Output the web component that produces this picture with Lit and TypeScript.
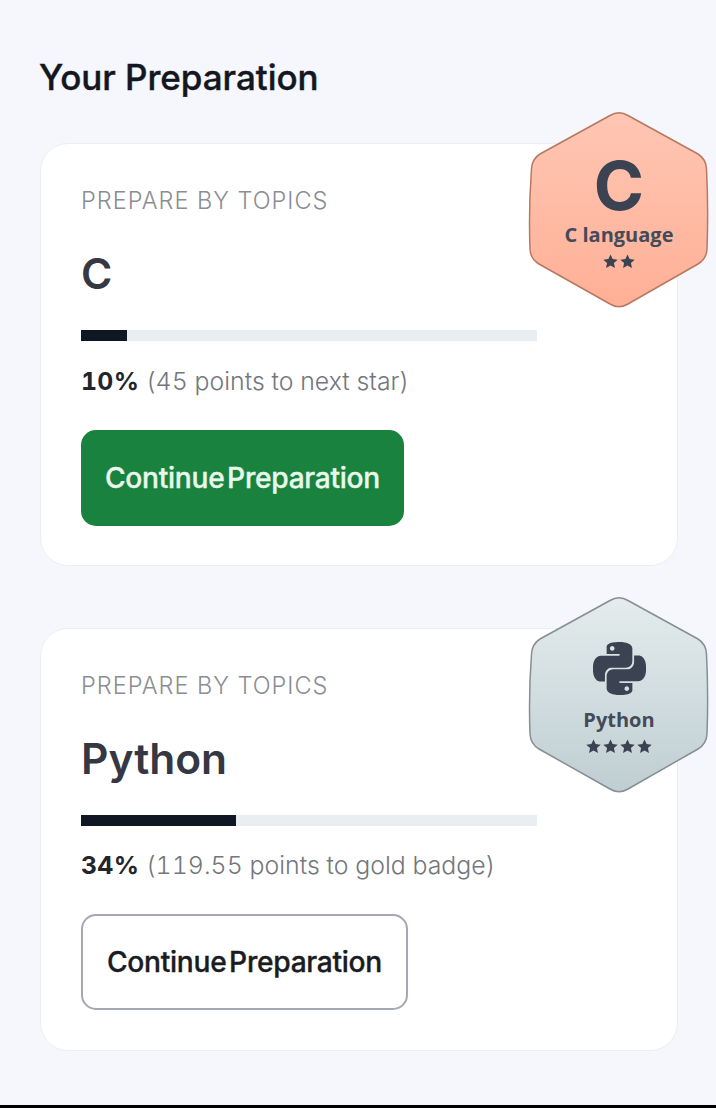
import { LitElement, html, css, svg } from "lit";
import { customElement } from "lit/decorators.js";

const PY = "M14.25.18l.9.2.73.26.59.3.45.32.34.34.25.34.16.33.1.3.04.26.02.2-.01.13V8.5l-.05.63-.13.55-.21.46-.26.38-.3.31-.33.25-.35.19-.35.14-.33.1-.3.07-.26.04-.21.02H8.77l-.69.05-.59.14-.5.22-.41.27-.33.32-.27.35-.2.36-.15.37-.1.35-.07.32-.04.27-.02.21v3.06H3.17l-.21-.03-.28-.07-.32-.12-.35-.18-.36-.26-.36-.36-.35-.46-.32-.59-.28-.73-.21-.88-.14-1.05-.05-1.23.06-1.22.16-1.04.24-.87.32-.71.36-.57.4-.44.42-.33.42-.24.4-.16.36-.1.32-.05.24-.01h.16l.06.01h8.16v-.83H6.18l-.01-2.75-.02-.37.05-.34.11-.31.17-.28.25-.26.31-.23.38-.2.44-.18.51-.15.58-.12.64-.1.71-.06.77-.04.84-.02 1.27.05zm-6.3 1.98l-.23.33-.08.41.08.41.23.34.33.22.41.09.41-.09.33-.22.23-.34.08-.41-.08-.41-.23-.33-.33-.22-.41-.09-.41.09zm13.09 3.95l.28.06.32.12.35.18.36.27.36.35.35.47.32.59.28.73.21.88.14 1.04.05 1.23-.06 1.23-.16 1.04-.24.86-.32.71-.36.57-.4.45-.42.33-.42.24-.4.16-.36.09-.32.05-.24.02-.16-.01h-8.22v.82h5.84l.01 2.76.02.36-.05.34-.11.31-.17.29-.25.25-.31.24-.38.2-.44.17-.51.15-.58.13-.64.09-.71.07-.77.04-.84.01-1.27-.04-1.07-.14-.9-.2-.73-.25-.59-.3-.45-.33-.34-.34-.25-.34-.16-.33-.1-.3-.04-.25-.02-.2.01-.13v-5.34l.05-.64.13-.54.21-.46.26-.38.3-.32.33-.24.35-.2.35-.14.33-.1.3-.06.26-.04.21-.02.13-.01h5.84l.69-.05.59-.14.5-.21.41-.28.33-.32.27-.35.2-.36.15-.36.1-.35.07-.32.04-.28.02-.21V6.07h2.09l.14.01zm-6.47 14.25l-.23.33-.08.41.08.41.23.33.33.23.41.08.41-.08.33-.23.23-.33.08-.41-.08-.41-.23-.33-.33-.23-.41-.08-.41.08z";
const HEX = "M80 4.500 Q89 -1 98 4.500 L168 43 Q176 48 176.500 58 Q178.500 98 177 138 Q176.500 148 168 153 L98 193 Q89 198.500 80 193 L9 153 Q0.500 148 0 138 Q-1.500 98 1.500 58 Q2 48 10 43 Z";
const STAR = "M12 2l3 6.600 7.200.8-5.400 4.800 1.500 7.100L12 17.700l-6.300 3.600 1.500-7.100L1.800 9.400l7.200-.8z";

interface Topic {
  name: string; pct: number; rest: string; solid: boolean;
  from: string; to: string; edge: string; stars: number; badge: string; gid: string; nudge: string;
}
const topics: Topic[] = [
  { name: "C", pct: 10, rest: "(45 points to next star)", solid: true, from: "#ffc6b3", to: "#ffb096", edge: "#b87862", stars: 2, badge: "C language", gid: "gc", nudge: "" },
  { name: "Python", pct: 34, rest: "(119.55 points to gold badge)", solid: false, from: "#e4ecec", to: "#bfced3", edge: "#858f94", stars: 4, badge: "Python", gid: "gp", nudge: "second" },
];

@customElement("app-root")
export class AppRoot extends LitElement {
  static styles = css`
    :host { display: block; }
    .page { min-height: 1108px; box-sizing: border-box; background: #f5f7fc; display: flex; flex-direction: column; padding-top: 57px; font-family: "Inter", "Noto Sans", sans-serif; }
    h1 { margin: 0 0 45px 39px; font-size: 35px; line-height: 41px; font-weight: 500; color: #14171f; letter-spacing: -0.05px; -webkit-text-stroke: 0.4px #14171f; }
    .card { position: relative; box-sizing: border-box; width: 638px; height: 423px; margin: 0 0 62px 40px; padding: 42px 40px 0; background: #fff; border: 1px solid #eceef3; border-radius: 28px; }
    .card.second { margin-bottom: 0; }
    .label { font-size: 23.500px; line-height: 30px; color: #8a8d92; letter-spacing: 1px; font-weight: 300; }
    .name { margin-top: 28px; font-size: 42.500px; line-height: 60px; font-weight: 600; color: #353842; }
    .track { margin-top: 26px; width: 456px; height: 11px; background: #e8eef1; }
    .fill { height: 100%; background: #0f1724; }
    .status { margin-top: 24px; font-size: 24.800px; line-height: 32px; color: #73767d; font-weight: 300; white-space: nowrap; font-feature-settings: "tnum"; letter-spacing: 0.05px; }
    .status b { font-weight: 700; color: #22252c; letter-spacing: 0.3px; }
    .second .status { margin-top: 23px; }
    .btn { box-sizing: border-box; margin-top: 33px; height: 96px; width: 323px; display: flex; align-items: center; justify-content: center; border-radius: 15px; font-size: 28.200px; font-weight: 500; letter-spacing: -0.3px; word-spacing: -4.500px; white-space: nowrap; -webkit-text-stroke: 0.35px currentColor; }
    .btn.solid { background: #18823e; color: #e8f8ea; }
    .btn.line { width: 327px; background: #fff; color: #1a1c22; border: 2px solid #a5a7b4; }
    .badge { position: absolute; top: -33px; right: -31px; width: 178px; height: 197px; display: flex; flex-direction: column; align-items: center; font-family: "Open Sans", "Noto Sans", sans-serif; color: #454a59; }
    .hex { position: absolute; inset: 0; width: 178px; height: 197px; overflow: visible; }
    .top { position: relative; height: 108px; display: flex; align-items: flex-end; justify-content: center; }
    .glyph { font-family: "Inter", sans-serif; font-size: 68px; line-height: 68px; font-weight: 700; color: #3b4252; }
    .py { width: 53px; height: 53px; fill: #3b4252; margin-bottom: 9px; }
    .bname { position: relative; margin-top: 2px; font-size: 20px; line-height: 27px; font-weight: 700; white-space: nowrap; }
    .stars { position: relative; display: flex; gap: 0; margin-top: 5px; }
    .stars svg { width: 17px; height: 17px; fill: #3b4252; }
    .bar { margin-top: auto; height: 3px; background: #000; }
  `;

  private badge(t: Topic) {
    return html`<div class="badge">
      <svg class="hex" viewBox="0 0 178 197">
        <defs>
          <linearGradient id=${t.gid} x1="0" y1="0" x2="0" y2="1">
            <stop offset="0" stop-color=${t.from}></stop>
            <stop offset="1" stop-color=${t.to}></stop>
          </linearGradient>
        </defs>
        <path d=${HEX} fill=${`url(#${t.gid})`} stroke=${t.edge} stroke-width="1.500"></path>
      </svg>
      <div class="top">
        ${t.name === "C"
          ? html`<span class="glyph">C</span>`
          : html`<svg class="py" viewBox="0 0 24 24"><path fill-rule="evenodd" d=${PY}></path></svg>`}
      </div>
      <div class="bname">${t.badge}</div>
      <div class="stars">
        ${Array.from({ length: t.stars }, () => html`<svg viewBox="0 0 24 24">${svg`<path d=${STAR}></path>`}</svg>`)}
      </div>
    </div>`;
  }

  render() {
    return html`<div class="page">
      <h1>Your Preparation</h1>
      ${topics.map(
        (t) => html`<section class="card ${t.nudge}">
          <div class="label">PREPARE BY TOPICS</div>
          <div class="name">${t.name}</div>
          <div class="track"><div class="fill" style="width:${t.pct}%"></div></div>
          <div class="status"><b>${t.pct}%</b> ${t.rest}</div>
          <div class="btn ${t.solid ? "solid" : "line"}">Continue Preparation</div>
          ${this.badge(t)}
        </section>`
      )}
      <div class="bar"></div>
    </div>`;
  }
}
